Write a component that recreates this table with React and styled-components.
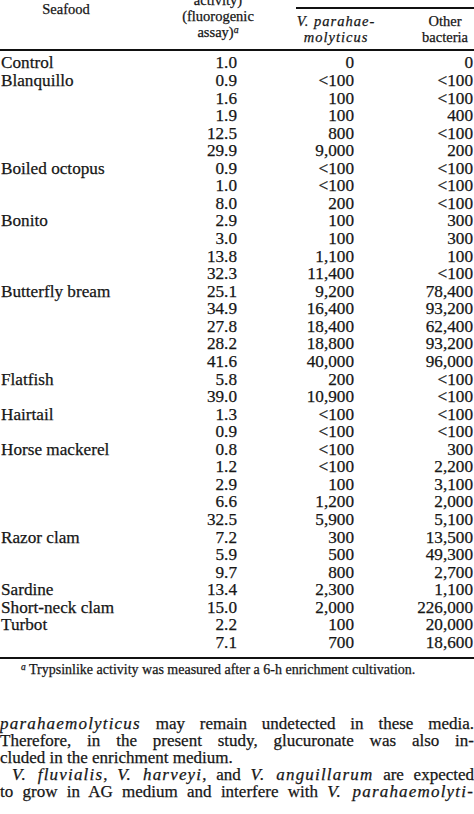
import React from "react";
import styled, { createGlobalStyle } from "styled-components";

const GlobalStyle = createGlobalStyle`
  html, body { margin: 0; padding: 0; background: #ffffff; }
  body { overflow: hidden; }
`;

const Page = styled.div`
  width: 474px;
  height: 814px;
  overflow: hidden;
  background: #ffffff;
  color: #161616;
  font-family: "Liberation Serif", "Times New Roman", serif;
  -webkit-text-stroke: 0.25px #161616;
`;

const Sheet = styled.div`
  margin-top: -8px;
`;

const TableHead = styled.div`
  display: flex;
  align-items: flex-start;
  border-bottom: 2px solid #111;
  font-size: 14.5px;
  line-height: 16px;
`;

const HeadCell = styled.div`
  width: ${(p) => p.$w}px;
  flex: none;
  text-align: center;
  white-space: nowrap;
  padding-top: ${(p) => p.$top || 0}px;
  padding-left: ${(p) => p.$left || 0}px;
  padding-bottom: ${(p) => p.$bottom || 0}px;
  box-sizing: border-box;
`;

const Group = styled.div`
  flex: 1;
  margin-top: 15px;
  border-top: 2px solid #111;
  padding-top: 4px;
  display: flex;
  justify-content: space-between;
`;

const Sup = styled.sup`
  font-style: italic;
  font-size: 0.68em;
  line-height: 0;
  vertical-align: 0.45em;
`;

const Ital = styled.i`
  font-style: italic;
  letter-spacing: ${(p) => (p.$tight ? "0" : "0.07em")};
`;

const TableBody = styled.div`
  padding: 3.4px 0 5.6px;
  border-bottom: 2px solid #111;
  font-size: 17.2px;
  line-height: 17.56px;
`;

const Row = styled.div`
  display: grid;
  grid-template-columns: 150px 87px 117px 119px;
  white-space: nowrap;
`;

const Cell = styled.div`
  text-align: ${(p) => (p.$num ? "right" : "left")};
  padding-left: ${(p) => (p.$num ? 0 : 1)}px;
`;

const Footnote = styled.p`
  margin: 2.8px 0 0;
  padding-left: 21px;
  font-size: 14px;
  line-height: 16px;
  white-space: nowrap;
`;

const Body = styled.div`
  margin-top: 37px;
  font-size: 17px;
  line-height: 17px;
`;

const Line = styled.div`
  white-space: nowrap;
  text-align: ${(p) => (p.$last ? "left" : "justify")};
  text-align-last: ${(p) => (p.$last ? "left" : "justify")};
  padding-left: ${(p) => (p.$indent ? 12 : 0)}px;
`;

const rows = [
  ["Control", "1.0", "0", "0"],
  ["Blanquillo", "0.9", "<100", "<100"],
  ["", "1.6", "100", "<100"],
  ["", "1.9", "100", "400"],
  ["", "12.5", "800", "<100"],
  ["", "29.9", "9,000", "200"],
  ["Boiled octopus", "0.9", "<100", "<100"],
  ["", "1.0", "<100", "<100"],
  ["", "8.0", "200", "<100"],
  ["Bonito", "2.9", "100", "300"],
  ["", "3.0", "100", "300"],
  ["", "13.8", "1,100", "100"],
  ["", "32.3", "11,400", "<100"],
  ["Butterfly bream", "25.1", "9,200", "78,400"],
  ["", "34.9", "16,400", "93,200"],
  ["", "27.8", "18,400", "62,400"],
  ["", "28.2", "18,800", "93,200"],
  ["", "41.6", "40,000", "96,000"],
  ["Flatfish", "5.8", "200", "<100"],
  ["", "39.0", "10,900", "<100"],
  ["Hairtail", "1.3", "<100", "<100"],
  ["", "0.9", "<100", "<100"],
  ["Horse mackerel", "0.8", "<100", "300"],
  ["", "1.2", "<100", "2,200"],
  ["", "2.9", "100", "3,100"],
  ["", "6.6", "1,200", "2,000"],
  ["", "32.5", "5,900", "5,100"],
  ["Razor clam", "7.2", "300", "13,500"],
  ["", "5.9", "500", "49,300"],
  ["", "9.7", "800", "2,700"],
  ["Sardine", "13.4", "2,300", "1,100"],
  ["Short-neck clam", "15.0", "2,000", "226,000"],
  ["Turbot", "2.2", "100", "20,000"],
  ["", "7.1", "700", "18,600"],
];

export default function App() {
  return (
    <Page>
      <GlobalStyle />
      <Sheet>
        <TableHead>
          <HeadCell $w={132} $top={8.5}>Seafood</HeadCell>
          <HeadCell $w={164} $left={8} $bottom={9}>
            activity)
            <br />
            (fluorogenic
            <br />
            assay)<Sup>a</Sup>
          </HeadCell>
          <Group>
            <HeadCell $w={80}>
              <Ital>V. parahae-</Ital>
              <br />
              <Ital>molyticus</Ital>
            </HeadCell>
            <HeadCell $w={58}>
              Other
              <br />
              bacteria
            </HeadCell>
          </Group>
        </TableHead>
        <TableBody>
          {rows.map((r, i) => (
            <Row key={i}>
              <Cell>{r[0]}</Cell>
              <Cell $num>{r[1]}</Cell>
              <Cell $num>{r[2]}</Cell>
              <Cell $num>{r[3]}</Cell>
            </Row>
          ))}
        </TableBody>
        <Footnote>
          <Sup>a</Sup> Trypsinlike activity was measured after a 6-h enrichment cultivation.
        </Footnote>
        <Body>
          <Line>
            <Ital>parahaemolyticus</Ital> may remain undetected in these media.
          </Line>
          <Line>Therefore, in the present study, glucuronate was also in-</Line>
          <Line $last>cluded in the enrichment medium.</Line>
          <Line $indent>
            <Ital>V. fluvialis</Ital>, <Ital>V. harveyi</Ital>, and <Ital>V. anguillarum</Ital> are expected
          </Line>
          <Line>
            to grow in AG medium and interfere with <Ital>V. parahaemolyti-</Ital>
          </Line>
        </Body>
      </Sheet>
    </Page>
  );
}
